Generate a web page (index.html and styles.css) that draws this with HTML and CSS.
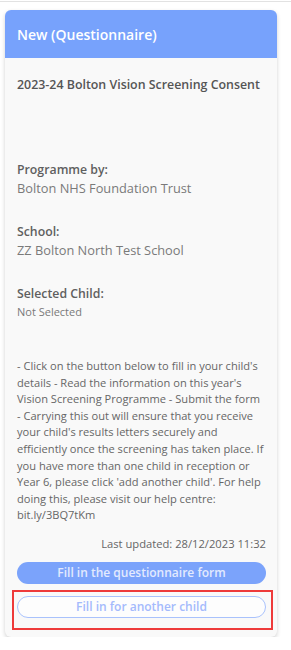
FILE: index.html
```html
<!DOCTYPE html>
<html>
<head>
<meta name="viewport" content="width=device-width, initial-scale=1">
<title>Questionnaire</title>
<link rel="stylesheet" href="styles.css">
</head>
<body>

<div class="topline"></div>

<div class="card">
  <div class="card-header">New (Questionnaire)</div>

  <div class="card-body">
    <h4 class="title">2023-24 Bolton Vision Screening Consent</h4>

    <div class="field">
      <div class="label">Programme by:</div>
      <div class="value">Bolton NHS Foundation Trust</div>
    </div>

    <div class="field">
      <div class="label">School:</div>
      <div class="value">ZZ Bolton North Test School</div>
    </div>

    <div class="field">
      <div class="label">Selected Child:</div>
      <div class="value small">Not Selected</div>
    </div>

    <p class="info">- Click on the button below to fill in your child's details - Read the information on this year's Vision Screening Programme - Submit the form - Carrying this out will ensure that you receive your child's results letters securely and efficiently once the screening has taken place. If you have more than one child in reception or Year 6, please click 'add another child'. For help doing this, please visit our help centre: bit.ly/3BQ7tKm</p>

    <div class="updated">Last updated: 28/12/2023 11:32</div>

    <button class="btn btn-fill">Fill in the questionnaire form</button>
    <div class="highlight">
      <button class="btn btn-outline">Fill in for another child</button>
    </div>
  </div>
</div>

</body>
</html>
```

FILE: styles.css
```css
body {
  margin: 0;
  font-family: "Open Sans", Arial, sans-serif;
  background-color: #fff;
}

.topline {
  height: 1px;
  border-bottom: 1px solid #e2e2e2;
}

/* the card */
.card {
  width: 272px;
  margin: 8px 0 0 5px;
  background-color: #f9f9f9;
  border-radius: 6px;
  box-shadow: 0 2px 4px rgba(0, 0, 0, 0.18);
  overflow: hidden;
}

.card-header {
  height: 48px;
  display: flex;
  align-items: center;
  padding: 0 12px;
  background-color: #77a2fc;
  color: #fff;
  font-size: 14px;
  font-weight: 600;
}

.card-body {
  padding: 18px 11px 7px 12px;
}

.title {
  margin: 0 0 67px 0;
  font-size: 12.4px;
  line-height: 18px;
  font-weight: 600;
  color: #555;
}

.field {
  margin-bottom: 26px;
}

.label {
  font-size: 12.3px;
  font-weight: 600;
  color: #5f5f5f;
  line-height: 18px;
}

.value {
  font-size: 12.8px;
  color: #7a7a7a;
  line-height: 18px;
}

.value.small {
  font-size: 11px;
}

.info {
  margin: 37px 0 0 0;
  font-size: 11.1px;
  line-height: 16.6px;
  color: #666;
}

.updated {
  margin-top: 12px;
  text-align: right;
  font-size: 11.2px;
  color: #666;
}

/* buttons */
.btn {
  display: block;
  width: 100%;
  height: 22px;
  border-radius: 11px;
  font-family: "Open Sans", Arial, sans-serif;
  font-size: 12px;
  font-weight: 600;
  cursor: pointer;
}

.btn-fill {
  margin-top: 11px;
  border: none;
  background-color: #7ba3fb;
  color: #e3eafe;
}

.btn-outline {
  border: 1px solid #a9c2fc;
  background-color: #fdfdfd;
  color: #a4bafc;
}

.highlight {
  margin: 6px -7px 0 -5px;
  padding: 4px 5px 10px 3px;
  border: 2px solid #ee3a3a;
}
```
